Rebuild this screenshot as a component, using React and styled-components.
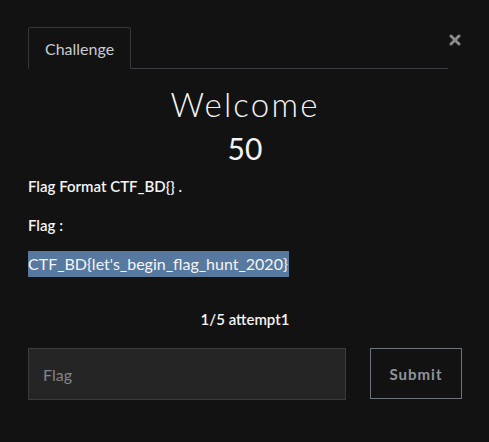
import React from "react";
import styled, { createGlobalStyle } from "styled-components";

const GlobalStyle = createGlobalStyle`
  html, body {
    margin: 0;
    background: #121212;
  }
  body {
    font-family: "Lato", "Noto Sans", sans-serif;
    color: #f2f2f2;
  }
`;

function App() {
  return (
    <>
      <GlobalStyle />
      <Modal>
        <Header>
          <TabBar>
            <Tab>Challenge</Tab>
          </TabBar>
          <CloseButton aria-label="Close">
            <svg width="12" height="12" viewBox="0 0 12 12">
              <path
                d="M2 2 L10 10 M10 2 L2 10"
                stroke="#8a8a8a"
                strokeWidth="3"
                strokeLinecap="round"
              />
            </svg>
          </CloseButton>
        </Header>

        <Title>Welcome</Title>
        <Points>50</Points>

        <Text>Flag Format CTF_BD{"{}"} .</Text>
        <Text>Flag :</Text>
        <Text>
          <Selected>CTF_BD{"{let's_begin_flag_hunt_2020}"}</Selected>
        </Text>

        <Attempts>1/5 attempt1</Attempts>

        <SubmitRow>
          <FlagInput type="text" placeholder="Flag" />
          <SubmitButton>Submit</SubmitButton>
        </SubmitRow>
      </Modal>
    </>
  );
}

export default App;

const Modal = styled.div`
  width: 434px;
  padding: 27px 27px 0 28px;
`;

const Header = styled.div`
  display: flex;
  align-items: flex-start;
`;

const TabBar = styled.nav`
  display: flex;
  width: 420px;
  border-bottom: 1px solid #3a3d42;
`;

const Tab = styled.div`
  height: 40px;
  padding: 0 16px;
  margin-bottom: -1px;
  display: flex;
  align-items: center;
  border: 1px solid #34373b;
  border-bottom-color: #121212;
  border-radius: 3px 3px 0 0;
  font-size: 16px;
  color: #c8ccd1;
`;

const CloseButton = styled.div`
  margin: 7px 0 0 1px;
  width: 12px;
  height: 12px;
  display: flex;
`;

const Title = styled.h1`
  margin: 15px 0 0;
  text-align: center;
  font-family: "Lato", sans-serif;
  font-weight: 300;
  font-size: 33px;
  letter-spacing: 2.2px;
  line-height: 40px;
  color: #f4f4f4;
`;

const Points = styled.h2`
  margin: 9px 0 0;
  text-align: center;
  font-weight: 400;
  font-size: 30px;
  line-height: 30px;
  color: #f4f4f4;
`;

const Text = styled.p`
  margin: 10px 0 0;
  font-size: 15px;
  font-weight: 600;
  line-height: 26px;
  color: #f4f4f4;
  & + & {
    margin-top: 13px;
  }
`;

const Selected = styled.span`
  background: #5779a0;
  font-size: 16px;
  font-weight: 400;
  padding: 3px 1px 4px 0;
`;

const Attempts = styled.div`
  margin-top: 33px;
  text-align: center;
  font-size: 15px;
  font-weight: 600;
  color: #f4f4f4;
`;

const SubmitRow = styled.div`
  display: flex;
  justify-content: space-between;
  margin-top: 20px;
`;

const FlagInput = styled.input`
  box-sizing: border-box;
  width: 318px;
  height: 52px;
  padding: 0 14px;
  background: #252525;
  border: 1px solid #3b3b3b;
  font-family: "Lato", sans-serif;
  font-size: 16px;
  color: #ddd;
  outline: none;
  &::placeholder {
    color: #80858b;
  }
`;

const SubmitButton = styled.button`
  box-sizing: border-box;
  width: 92px;
  height: 51px;
  background: transparent;
  border: 1px solid #6c737b;
  font-family: "Lato", sans-serif;
  font-weight: 700;
  font-size: 15px;
  letter-spacing: 1px;
  color: #8f959c;
`;
